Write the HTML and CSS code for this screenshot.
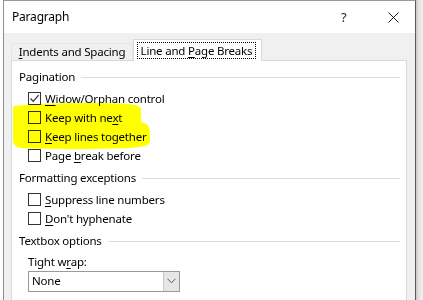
FILE: index.html
```html
<!DOCTYPE html>
<html>
<head>
<meta charset="utf-8">
<link rel="stylesheet" href="styles.css">
</head>
<body>
<div class="screen">
  <div class="behind"></div>
  <div class="dialog">
    <div class="titlebar">
      <span class="title">Paragraph</span>
      <span class="help">?</span>
      <span class="close">
        <svg width="11" height="11" viewBox="0 0 11 11"><path d="M0.5 0.5 L10.5 10.5 M10.5 0.5 L0.5 10.5" stroke="#1a1a1a" stroke-width="1" fill="none"/></svg>
      </span>
    </div>
    <div class="body">
      <div class="tabs">
        <div class="tab"><span><u>I</u>ndents and Spacing</span></div>
        <div class="tab active"><span class="focus"><span>Line and <u>P</u>age Breaks</span></span></div>
      </div>
      <div class="panel">
        <div class="group">
          <div class="group-head"><span>Pagination</span><span class="rule"></span></div>
          <div class="item"><span class="box checked"><svg width="11" height="11" viewBox="0 0 11 11"><path d="M1.5 5.5 L4.2 8.3 L9.6 2.2" stroke="#333" stroke-width="1.2" fill="none"/></svg></span><span><u>W</u>idow/Orphan control</span></div>
          <div class="item"><span class="box"></span><span>Keep with ne<u>x</u>t</span></div>
          <div class="item"><span class="box"></span><span><u>K</u>eep lines together</span></div>
          <div class="item"><span class="box"></span><span>Page <u>b</u>reak before</span></div>
        </div>
        <div class="group">
          <div class="group-head"><span>Formatting exceptions</span><span class="rule"></span></div>
          <div class="item"><span class="box"></span><span><u>S</u>uppress line numbers</span></div>
          <div class="item"><span class="box"></span><span><u>D</u>on't hyphenate</span></div>
        </div>
        <div class="group">
          <div class="group-head"><span>Textbox options</span><span class="rule"></span></div>
          <div class="field-label">Tight w<u>r</u>ap:</div>
          <div class="select">
            <span class="value">None</span>
            <span class="drop"><svg width="9" height="6" viewBox="0 0 9 6"><path d="M0.5 0.8 L4.5 4.8 L8.5 0.8" stroke="#555" stroke-width="1" fill="none"/></svg></span>
          </div>
        </div>
      </div>
    </div>
  </div>
  <div class="shadow"></div>
  <svg class="highlight" width="160" height="60" viewBox="0 0 160 60">
    <path d="M14 6 C40 3 90 2 128 4 C136 4.5 141 6 141 10 L141 22 C146 23 149 25 149.5 30 L150 40 C150 45 146 47 130 48 C95 49.5 50 49.5 22 48 C16 47.5 13 45 13 40 L13 12 C13 8 13.5 6 14 6 Z" fill="#ffff00"/>
  </svg>
</div>
</body>
</html>
```

FILE: styles.css
```css
* { box-sizing: border-box; }
html, body { margin: 0; padding: 0; }
body {
  width: 423px;
  height: 300px;
  overflow: hidden;
  background: #ffffff;
  font-family: "Noto Sans", "Open Sans", sans-serif;
  font-size: 11.5px;
  letter-spacing: -0.2px;
  color: #000;
}
u { text-decoration: underline; text-underline-offset: 2px; text-decoration-thickness: 1px; }
.screen {
  position: relative;
  display: flex;
  height: 300px;
}
.behind {
  width: 3px;
  flex: none;
  background: #fdfdfd;
}
.dialog {
  width: 413px;
  flex: none;
  border-left: 1px solid #8e8e8e;
  border-top: 1px solid #9a9a9a;
  border-right: 1px solid #5a5a5a;
  display: flex;
  flex-direction: column;
}
.shadow {
  flex: 1;
  background: linear-gradient(to right, #c8c8c8, #e4e4e4 40%, #f2f2f2);
}
.titlebar {
  height: 32px;
  flex: none;
  background: #ffffff;
  display: flex;
  align-items: center;
  padding-left: 8px;
}
.title { flex: 1; padding-bottom: 1px; font-size: 12px; }
.help {
  width: 10px;
  margin-right: 37px;
  font-size: 13px;
  color: #222;
  padding-bottom: 1px;
}
.close {
  width: 11px;
  height: 11px;
  margin-right: 16px;
  display: flex;
}
.body {
  flex: 1;
  background: #f0f0f0;
  padding: 6px 7px 0 7px;
  display: flex;
  flex-direction: column;
}
.tabs {
  display: flex;
  align-items: flex-end;
  height: 21px;
  position: relative;
  z-index: 1;
}
.tab {
  height: 17px;
  width: 122px;
  display: flex;
  align-items: center;
  justify-content: center;
  border: 1px solid #e6e6e6;
  border-bottom: none;
  padding-bottom: 1px;
  white-space: nowrap;
}
.tab.active {
  height: 22px;
  margin-bottom: -1px;
  width: 129px;
  background: #ffffff;
  border: 1px solid #d9d9d9;
  border-bottom: none;
  padding: 2px 5px 2px 3px;
  align-items: stretch;
  justify-content: stretch;
}
.focus {
  flex: 1;
  border: 1px dotted #000;
  display: flex;
  align-items: center;
  justify-content: center;
  padding-bottom: 1px;
}
.panel {
  flex: 1;
  background: #ffffff;
  border: 1px solid #d9d9d9;
  border-bottom: none;
  margin-right: 1px;
  padding: 6px 6px 0 7px;
}
.group { margin-bottom: 3.5px; }
.group-head {
  display: flex;
  align-items: center;
  height: 19px;
  margin-bottom: 2.5px;
  gap: 6px;
  white-space: nowrap;
}
.rule {
  flex: 1;
  height: 1px;
  background: #dcdcdc;
  margin-top: 1px;
}
.item {
  display: flex;
  align-items: center;
  height: 19px;
  padding-left: 9px;
  gap: 4px;
  white-space: nowrap;
}
.box {
  width: 13px;
  height: 13px;
  flex: none;
  border: 1px solid #333333;
  background: #ffffff;
  display: flex;
  align-items: center;
  justify-content: center;
}
.field-label {
  height: 19px;
  line-height: 19px;
  padding-left: 9px;
  margin-top: -1px;
}
.select {
  margin-left: 9px;
  width: 152px;
  height: 21px;
  border: 1px solid #9a9a9a;
  background: #ffffff;
  display: flex;
}
.value {
  flex: 1;
  padding-left: 3px;
  display: flex;
  align-items: center;
  padding-bottom: 1px;
}
.drop {
  width: 16px;
  background: #e6e6e6;
  border-left: 1px solid #c8c8c8;
  display: flex;
  align-items: center;
  justify-content: center;
}
.highlight {
  position: absolute;
  left: 0;
  top: 100px;
  z-index: 3;
  mix-blend-mode: multiply;
  pointer-events: none;
}
```
